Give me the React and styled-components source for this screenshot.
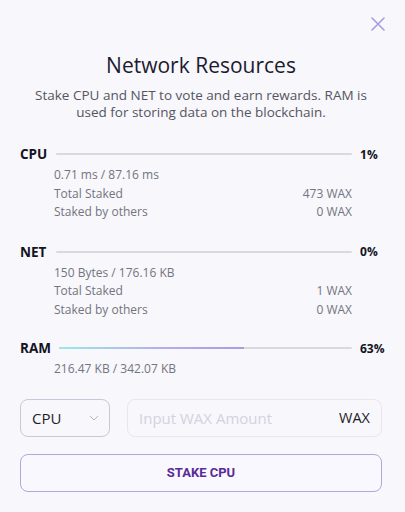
import React from "react";
import styled, { createGlobalStyle } from "styled-components";

const Global = createGlobalStyle`
  html, body { margin: 0; padding: 0; background: #f7f7fc; }
  body { width: 405px; height: 512px; overflow: hidden; font-family: "Open Sans", "Noto Sans", sans-serif; }
  * { box-sizing: border-box; }
`;

const Modal = styled.div`
  position: relative;
  width: 405px;
  height: 512px;
  background: #f7f7fc;
  padding: 50px 23px 0 20px;
  display: flex;
  flex-direction: column;
`;

const Close = styled.button`
  position: absolute;
  top: 15px;
  right: 18px;
  width: 18px;
  height: 18px;
  padding: 0;
  border: 0;
  background: none;
  display: flex;
  align-items: center;
  justify-content: center;
`;

const Title = styled.h1`
  margin: 0;
  text-align: center;
  font-family: "Open Sans", sans-serif;
  font-weight: 400;
  font-size: 21px;
  line-height: 30px;
  color: #1c1b2e;
`;

const Subtitle = styled.p`
  margin: 7px 0 0;
  text-align: center;
  font-size: 13.5px;
  line-height: 17px;
  color: #555560;
  padding: 0 10px;
`;

const Section = styled.div`
  margin-top: ${(p) => p.$top}px;
  display: flex;
  flex-direction: column;
`;

const Head = styled.div`
  display: flex;
  align-items: center;
  height: 18px;
`;

const Label = styled.span`
  width: ${(p) => p.$w}px;
  font-weight: 700;
  font-size: 13.5px;
  color: #14131f;
  flex-shrink: 0;
`;

const Track = styled.div`
  flex: 1;
  height: 2px;
  border-radius: 1px;
  background: #d9d9e1;
  position: relative;
  overflow: hidden;
`;

const Fill = styled.div`
  height: 100%;
  background: linear-gradient(90deg, #9ce8e6 0%, #b7aeea 55%, #ab9ae9 100%);
`;

const Pct = styled.span`
  width: 22px;
  margin-left: 8px;
  font-weight: 700;
  font-size: 12px;
  color: #14131f;
  flex-shrink: 0;
  white-space: nowrap;
`;

const Details = styled.div`
  padding: 0 30px 0 34px;
  margin-top: 3px;
  display: flex;
  flex-direction: column;
`;

const Row = styled.div`
  display: flex;
  justify-content: space-between;
  font-size: 12px;
  line-height: 18.5px;
  color: #74747e;
`;

const Controls = styled.div`
  margin-top: 20px;
  display: flex;
  gap: 17px;
`;

const Select = styled.div`
  width: 90px;
  height: 38px;
  border: 1px solid #c9c7d9;
  border-radius: 8px;
  display: flex;
  align-items: center;
  justify-content: space-between;
  padding: 0 10px 0 11px;
  font-size: 15px;
  color: #1e1d2c;
`;

const InputBox = styled.div`
  flex: 1;
  height: 38px;
  border: 1px solid #e8e6f0;
  border-radius: 8px;
  display: flex;
  align-items: center;
  justify-content: space-between;
  padding: 0 11px 0 11px;
  font-size: 15px;
`;

const Placeholder = styled.span`
  color: #d3d2de;
`;

const Unit = styled.span`
  color: #1e1d2c;
  font-size: 14.5px;
`;

const StakeButton = styled.button`
  margin-top: 17px;
  height: 38px;
  width: 100%;
  border: 1.5px solid #b2a6dc;
  border-radius: 8px;
  background: #f9f8ff;
  font-family: "Liberation Sans Narrow", "Roboto", sans-serif;
  font-weight: 700;
  font-size: 13px;
  color: #5a2a95;
  letter-spacing: 0;
`;

const resources = [
  {
    name: "CPU",
    w: 36,
    pct: 1,
    usage: "0.71 ms / 87.16 ms",
    total: "473 WAX",
    others: "0 WAX",
    top: 24,
  },
  {
    name: "NET",
    w: 36,
    pct: 0,
    usage: "150 Bytes / 176.16 KB",
    total: "1 WAX",
    others: "0 WAX",
    top: 21,
  },
  {
    name: "RAM",
    w: 39,
    pct: 63,
    usage: "216.47 KB / 342.07 KB",
    top: 20,
  },
];

export default function App() {
  return (
    <>
      <Global />
      <Modal>
        <Close aria-label="close">
          <svg width="16" height="16" viewBox="0 0 16 16">
            <path d="M2 2 L14 14 M14 2 L2 14" stroke="#a89cdf" strokeWidth="1.6" strokeLinecap="round" />
          </svg>
        </Close>
        <Title>Network Resources</Title>
        <Subtitle>
          Stake CPU and NET to vote and earn rewards. RAM is used for storing data on the blockchain.
        </Subtitle>
        {resources.map((r) => (
          <Section key={r.name} $top={r.top}>
            <Head>
              <Label $w={r.w}>{r.name}</Label>
              <Track>
                {r.name === "RAM" && <Fill style={{ width: `${r.pct}%` }} />}
              </Track>
              <Pct>{r.pct}%</Pct>
            </Head>
            <Details>
              <Row>
                <span>{r.usage}</span>
              </Row>
              {r.total && (
                <Row>
                  <span>Total Staked</span>
                  <span>{r.total}</span>
                </Row>
              )}
              {r.others && (
                <Row>
                  <span>Staked by others</span>
                  <span>{r.others}</span>
                </Row>
              )}
            </Details>
          </Section>
        ))}
        <Controls>
          <Select>
            <span>CPU</span>
            <svg width="10" height="6" viewBox="0 0 10 6">
              <path d="M1 1 L5 5 L9 1" fill="none" stroke="#b5b4c4" strokeWidth="1" />
            </svg>
          </Select>
          <InputBox>
            <Placeholder>Input WAX Amount</Placeholder>
            <Unit>WAX</Unit>
          </InputBox>
        </Controls>
        <StakeButton>STAKE CPU</StakeButton>
      </Modal>
    </>
  );
}
